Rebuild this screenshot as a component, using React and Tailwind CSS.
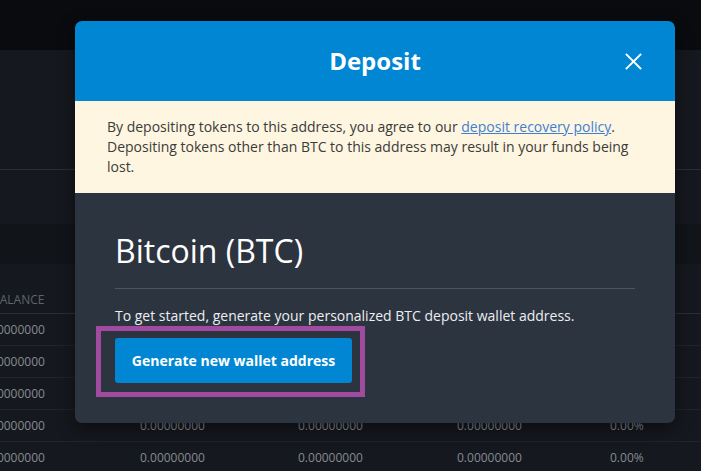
import React from 'react';

const rows = [0, 1, 2, 3, 4];

function Cell({ children, className = '' }) {
  return <div className={`flex items-center ${className}`}>{children}</div>;
}

const App = () => {
  return (
    <div className="relative w-[701px] h-[471px] overflow-hidden bg-[#15181e] font-['Open_Sans',sans-serif]">
      {/* page behind the modal */}
      <div className="h-[50px] bg-[#0a0b0e]" />
      <div className="h-[120px] border-b border-[#2a2e35]" />
      <div className="h-[54px]" />
      <div className="h-[40px] bg-[#111419]" />
      <div className="h-[50px] flex items-end border-b border-[#2a2e35] pb-[4px]">
        <span className="ml-[-8px] text-[12px] text-[#5f646c] uppercase">Balance</span>
      </div>
      {rows.map(r => (
        <div key={r} className="h-[32px] grid grid-cols-[160px_158px_159px_153px_1fr] ml-[-20px] border-b border-[#20242b] text-[12px] text-[#868b92]">
          <Cell>0.00000000</Cell>
          <Cell>0.00000000</Cell>
          <Cell>0.00000000</Cell>
          <Cell>0.00000000</Cell>
          <Cell>0.00%</Cell>
        </div>
      ))}

      {/* modal */}
      <div className="absolute left-[75px] top-[21px] w-[600px] rounded-[7px] overflow-hidden shadow-[0_6px_18px_rgba(0,0,0,0.45)]">
        <div className="relative h-[80px] bg-[#0086d3] flex items-center justify-center">
          <h1 className="text-[24px] font-bold text-white">Deposit</h1>
          <button className="absolute right-[33px] top-[32px] w-[17px] h-[17px] text-white">
            <svg viewBox="0 0 16 16" width="17" height="17" fill="none" stroke="currentColor" strokeWidth="1.9" strokeLinecap="square">
              <path d="M1.5 1.5l13 13M14.5 1.5l-13 13" />
            </svg>
          </button>
        </div>

        <div className="bg-[#fef6e0] px-8 py-4 text-[14px] leading-5 text-[#3b3b3b]">
          By depositing tokens to this address, you agree to our{' '}
          <a className="text-[#3f7fd3] underline">deposit recovery policy</a>. Depositing tokens other than BTC to this address may result in your funds being lost.
        </div>

        <div className="bg-[#2c3440] px-10 pt-[39px] pb-[40px]">
          <h2 className="text-[32px] leading-[1.2] text-white pb-[18px] border-b border-[#4d5561]">Bitcoin (BTC)</h2>
          <p className="mt-[17px] text-[14px] leading-5 text-[#eceef0]">
            To get started, generate your personalized BTC deposit wallet address.
          </p>
          <div className="relative mt-[12px] w-[237px]">
            <button className="w-[237px] h-[45px] rounded-[3px] bg-[#0086d3] text-white text-[14px] font-bold">
              Generate new wallet address
            </button>
            <div className="absolute left-[-19px] top-[-12px] w-[269px] h-[71px] border-[5px] border-[#a04aa0] pointer-events-none" />
          </div>
        </div>
      </div>
    </div>
  );
};

export default App;
